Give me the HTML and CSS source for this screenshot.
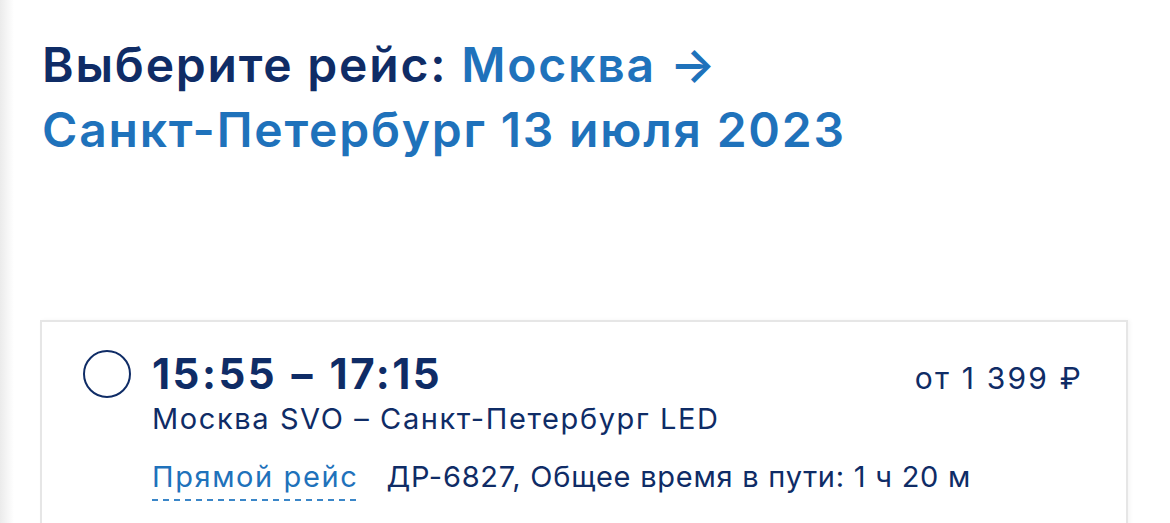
FILE: index.html
```html
<!DOCTYPE html>
<html lang="ru">
<head>
  <meta charset="UTF-8">
  <meta name="viewport" content="width=device-width, initial-scale=1.0">
  <title>Выбор рейса</title>
  <link rel="stylesheet" href="styles.css">
</head>
<body>

  <div class="page">
    <h1 class="title">
      Выберите рейс: <span class="route">Москва →<br>Санкт-Петербург 13 июля 2023</span>
    </h1>

    <div class="flight">
      <span class="radio"></span>

      <div class="info">
        <div class="head">
          <div class="time">15:55 – 17:15</div>
          <div class="price">от 1 399 ₽</div>
        </div>
        <div class="airports">Москва SVO – Санкт-Петербург LED</div>
        <div class="details">
          <span class="direct">Прямой рейс</span>
          <span class="meta">ДР-6827, Общее время в пути: 1 ч 20 м</span>
        </div>
      </div>
    </div>
  </div>

</body>
</html>
```

FILE: styles.css
```css
body {
  font-family: Inter, "Noto Sans", sans-serif;
  margin: 0;
  padding: 0;
  background: #fff;
  color: #0f2c66;
  overflow: hidden;
}

.page {
  height: 100vh;
  padding: 32px 42px 0 40px;
  background: linear-gradient(to right, #ebebeb, #fff 14px);
}

.title {
  margin: 0 0 0 2px;
  font-size: 48px;
  font-weight: 600;
  line-height: 65px;
  letter-spacing: 1.8px;
  color: #0f2c66;
}

.route {
  color: #1f72bb;
}

.flight {
  display: flex;
  align-items: flex-start;
  margin-top: 158px;
  padding: 27px 43px 40px 41px;
  border: 2px solid #e6e6e6;
  box-shadow: 2px 0 4px rgba(0, 0, 0, 0.04);
}

.radio {
  flex: none;
  width: 44px;
  height: 44px;
  margin-top: 1px;
  border: 2px solid #0f2c66;
  border-radius: 50%;
}

.info {
  flex: 1;
  margin-left: 21px;
}

.head {
  display: flex;
  justify-content: space-between;
  align-items: baseline;
}

.time {
  font-size: 42px;
  font-weight: 700;
  line-height: 50px;
  letter-spacing: 2.5px;
  word-spacing: 2px;
}

.price {
  font-size: 30px;
  letter-spacing: 2.2px;
}

.airports {
  font-size: 29px;
  line-height: 40px;
  letter-spacing: 1.6px;
}

.details {
  display: flex;
  gap: 28px;
  margin-top: 20px;
  font-size: 29px;
  line-height: 36px;
  white-space: nowrap;
}

.direct {
  color: #1f72bb;
  letter-spacing: 1.6px;
  padding-bottom: 6px;
  background: linear-gradient(to right, #3a86c8 6px, transparent 6px) repeat-x left bottom / 11px 2px;
}

.meta {
  letter-spacing: 0.75px;
}
```
